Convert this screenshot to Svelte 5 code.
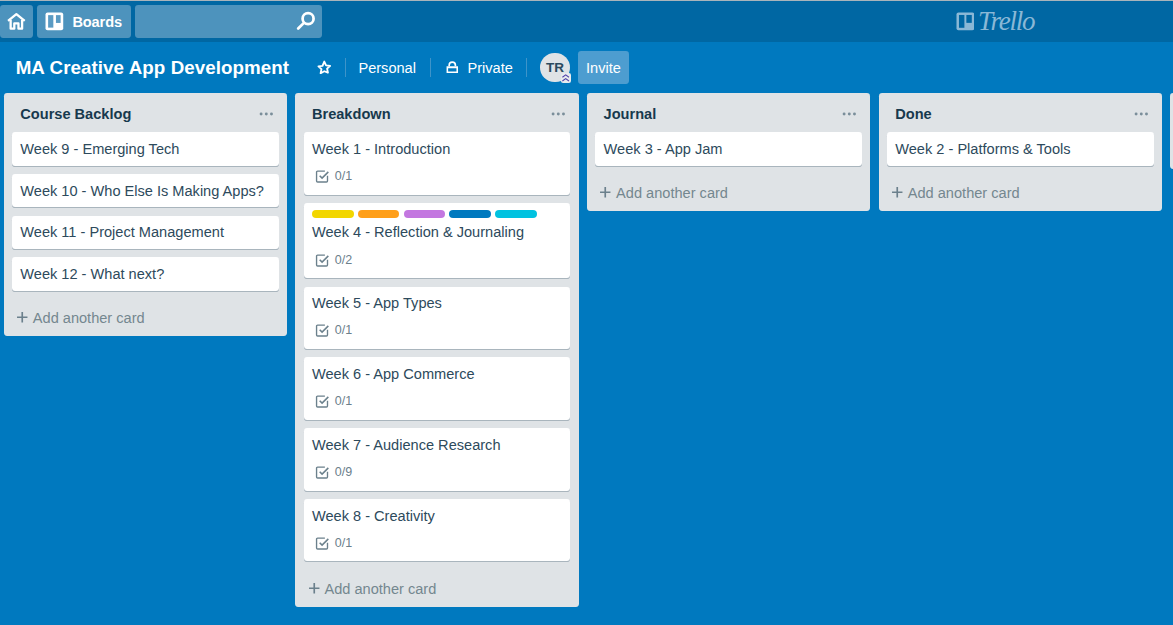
<script>
    const lists = [
        {
            name: 'Course Backlog',
            cards: [
                {title: 'Week 9 - Emerging Tech'},
                {title: 'Week 10 - Who Else Is Making Apps?'},
                {title: 'Week 11 - Project Management'},
                {title: 'Week 12 - What next?'}
            ]
        },
        {
            name: 'Breakdown',
            cards: [
                {title: 'Week 1 - Introduction', check: '0/1'},
                {
                    title: 'Week 4 - Reflection & Journaling',
                    check: '0/2',
                    labels: ['#f2d600', '#ff9f1a', '#c377e0', '#0079bf', '#00c2e0']
                },
                {title: 'Week 5 - App Types', check: '0/1'},
                {title: 'Week 6 - App Commerce', check: '0/1'},
                {title: 'Week 7 - Audience Research', check: '0/9'},
                {title: 'Week 8 - Creativity', check: '0/1'}
            ]
        },
        {name: 'Journal', cards: [{title: 'Week 3 - App Jam'}]},
        {name: 'Done', cards: [{title: 'Week 2 - Platforms & Tools'}]}
    ];
</script>

<div class="page">
    <header class="topbar">
        <button class="tile home" aria-label="Home">
            <svg width="18" height="18" viewBox="0 0 18 18" fill="none" stroke="white" stroke-width="2.200" stroke-linejoin="round">
                <path d="M1 8.500L9 2l8 6.500"/>
                <path d="M3.500 7.500V16h3.500v-5h4v5h3.500V7.500"/>
            </svg>
        </button>
        <button class="tile boards">
            <svg width="18" height="18" viewBox="0 0 18 18">
                <rect x="0.500" y="0.500" width="17" height="17" rx="2" fill="white"/>
                <rect x="3" y="3" width="5" height="12" fill="#5b9bc3"/>
                <rect x="10.500" y="3" width="4.500" height="7.500" fill="#5b9bc3"/>
            </svg>
            <span>Boards</span>
        </button>
        <div class="tile search">
            <svg width="19" height="19" viewBox="0 0 18 18" fill="none" stroke="white" stroke-width="2.500" stroke-linecap="round">
                <circle cx="11" cy="7" r="5"/>
                <path d="M7.200 10.800L2 16"/>
            </svg>
        </div>
        <div class="logo">
            <svg width="18" height="18" viewBox="0 0 19 19">
                <rect x="0.500" y="0.500" width="18" height="18" rx="2" fill="#8ab8d6"/>
                <rect x="3" y="3" width="5.500" height="13" fill="#0067a3"/>
                <rect x="10.500" y="3" width="5.500" height="8" fill="#0067a3"/>
            </svg>
            <span>Trello</span>
        </div>
    </header>

    <div class="board-head">
        <h1>MA Creative App Development</h1>
        <svg class="star" width="14" height="14" viewBox="0 0 14 14" fill="none" stroke="white" stroke-width="1.800" stroke-linejoin="round">
            <path d="M7 1.500l1.700 3.600 3.900.5-2.900 2.700.8 3.900L7 10.800l-3.500 1.900.8-3.900-2.900-2.700 3.900-.5z"/>
        </svg>
        <i class="sep"></i>
        <span class="head-item">Personal</span>
        <i class="sep"></i>
        <svg class="lock" width="14" height="14" viewBox="0 0 14 14" fill="white">
            <path d="M4 6V5a3 3 0 0 1 6 0v1" fill="none" stroke="white" stroke-width="1.600"/>
            <path d="M1.500 6h11v6.500h-11zM3 8v3h8V8z" fill-rule="evenodd"/>
        </svg>
        <span class="head-item">Private</span>
        <i class="sep"></i>
        <div class="avatar">
            TR
            <svg class="admin" width="9" height="9" viewBox="0 0 10 10" fill="none" stroke="#5243aa" stroke-width="1.200">
                <path d="M1.500 4.500L5 2l3.500 2.500M1.500 8.500L5 6l3.500 2.500"/>
            </svg>
        </div>
        <button class="invite">Invite</button>
    </div>

    <main class="lists">
        {#each lists as list}
            <section class="list">
                <div class="list-head">
                    <h2>{list.name}</h2>
                    <svg width="14" height="4" viewBox="0 0 14 4" fill="#7a8e9a">
                        <circle cx="2" cy="2" r="1.400"/>
                        <circle cx="7" cy="2" r="1.400"/>
                        <circle cx="12" cy="2" r="1.400"/>
                    </svg>
                </div>
                <div class="cards">
                    {#each list.cards as card}
                        <article class="card">
                            {#if card.labels}
                                <div class="labels">
                                    {#each card.labels as color}
                                        <span class="label" style="background: {color}"></span>
                                    {/each}
                                </div>
                            {/if}
                            <p>{card.title}</p>
                            {#if card.check}
                                <div class="badge">
                                    <svg width="14" height="14" viewBox="0 0 14 14" fill="none" stroke="#6b808c" stroke-width="1.300">
                                        <path d="M12 6.500V11.500a1 1 0 0 1-1 1H2.500a1 1 0 0 1-1-1V3a1 1 0 0 1 1-1H9.500"/>
                                        <path d="M4.500 6.500l2.300 2.300L12.800 2.800" stroke-width="1.500"/>
                                    </svg>
                                    <span>{card.check}</span>
                                </div>
                            {/if}
                        </article>
                    {/each}
                </div>
                <div class="add">
                    <svg width="12" height="12" viewBox="0 0 12 12" stroke="#6b808c" stroke-width="1.600">
                        <path d="M6 1v10M1 6h10"/>
                    </svg>
                    <span>Add another card</span>
                </div>
            </section>
        {/each}
        <section class="list stub"></section>
    </main>
</div>

<style>
    :global(body) {
        margin: 0;
        background-color: #0079bf;
    }

    /* the screenshot is scaled up a little from a 1126px wide window */
    .page {
        zoom: 1.0417;
        width: 1126px;
        height: 600px;
        overflow: hidden;
        font-family: "Liberation Sans", Arial, sans-serif;
        font-size: 14px;
        line-height: 20px;
        color: #17394d;
        background-color: #0079bf;
    }

    button {
        border: 0;
        padding: 0;
        font: inherit;
        color: white;
    }

    .topbar {
        display: flex;
        align-items: center;
        gap: 4px;
        height: 40px;
        box-sizing: border-box;
        background-color: #0067a3;
        border-top: 1px solid #a9b4bb;
    }

    .tile {
        display: flex;
        align-items: center;
        height: 32px;
        border-radius: 3px;
        background-color: #4d93bd;
    }

    .home {
        width: 32px;
        justify-content: center;
    }

    .boards {
        width: 90px;
        padding-left: 7.500px;
        box-sizing: border-box;
        gap: 8px;
        font-weight: bold;
    }

    .boards span {
        padding-top: 1.500px;
        letter-spacing: -0.100px;
    }

    .search {
        width: 179px;
        justify-content: flex-end;
        padding-right: 5.500px;
        box-sizing: border-box;
    }

    .logo {
        display: flex;
        align-items: center;
        gap: 3.500px;
        margin-left: 604.500px;
        color: #8ab8d6;
    }

    .logo span {
        font-family: "Liberation Serif", serif;
        font-style: italic;
        font-size: 26px;
        line-height: 26px;
        letter-spacing: -1.200px;
    }

    .board-head {
        display: flex;
        align-items: center;
        height: 49px;
        color: white;
    }

    h1 {
        margin: 2px 0 0 15px;
        font-size: 18px;
        font-weight: bold;
        letter-spacing: 0.070px;
    }

    .star {
        margin-left: 26.500px;
    }

    .sep {
        width: 1px;
        height: 18px;
        background-color: #3e94c9;
    }

    .star + .sep {
        margin: 0 12px 0 13px;
    }

    .head-item {
        padding-top: 2px;
    }

    .head-item + .sep {
        margin: 0 14px 0 13px;
    }

    .lock {
        margin-right: 7.500px;
    }

    .lock + .head-item + .sep {
        margin-left: 13px;
        margin-right: 12.500px;
    }

    .avatar {
        position: relative;
        width: 28px;
        height: 28px;
        border-radius: 50%;
        background-color: #dfe3e6;
        color: #2b4a5e;
        font-size: 13px;
        font-weight: bold;
        line-height: 28px;
        text-align: center;
    }

    .admin {
        position: absolute;
        right: -1px;
        bottom: -1px;
        background-color: #e8ebee;
        border-radius: 2px;
    }

    .invite {
        width: 49px;
        height: 32px;
        margin-left: 8px;
        padding-top: 1.500px;
        border-radius: 3px;
        background-color: #4d9dd0;
    }

    .lists {
        display: flex;
        align-items: flex-start;
        gap: 8px;
        padding-left: 3.500px;
    }

    .list {
        flex: 0 0 272px;
        border-radius: 3px;
        background-color: #dfe3e6;
    }

    .stub {
        height: 73px;
    }

    .list-head {
        display: flex;
        align-items: center;
        justify-content: space-between;
        box-sizing: border-box;
        height: 38px;
        padding: 3px 13px 0 16px;
    }

    h2 {
        margin: 0;
        font-size: 14px;
        font-weight: bold;
        color: #17394d;
    }

    .cards {
        display: flex;
        flex-direction: column;
        gap: 8px;
        padding: 0 8px;
    }

    .card {
        padding: 6.400px 8px 5.600px;
        border-radius: 3px;
        background-color: white;
        box-shadow: 0 1px 0 rgba(9, 45, 66, 0.25);
        color: #2d4a5c;
    }

    .card p {
        margin: 0;
    }

    .labels {
        display: flex;
        gap: 4px;
        margin-bottom: 4.200px;
    }

    .label {
        width: 40px;
        height: 8px;
        border-radius: 4px;
    }

    .badge {
        display: flex;
        align-items: center;
        gap: 5px;
        height: 20px;
        margin: 6px 0 2px 3px;
        font-size: 12px;
        color: #6b808c;
    }

    .add {
        display: flex;
        align-items: center;
        gap: 4px;
        height: 36px;
        margin-top: 8px;
        padding-left: 12px;
        color: #74878f;
    }

    .add span {
        padding-top: 1.500px;
    }
</style>
